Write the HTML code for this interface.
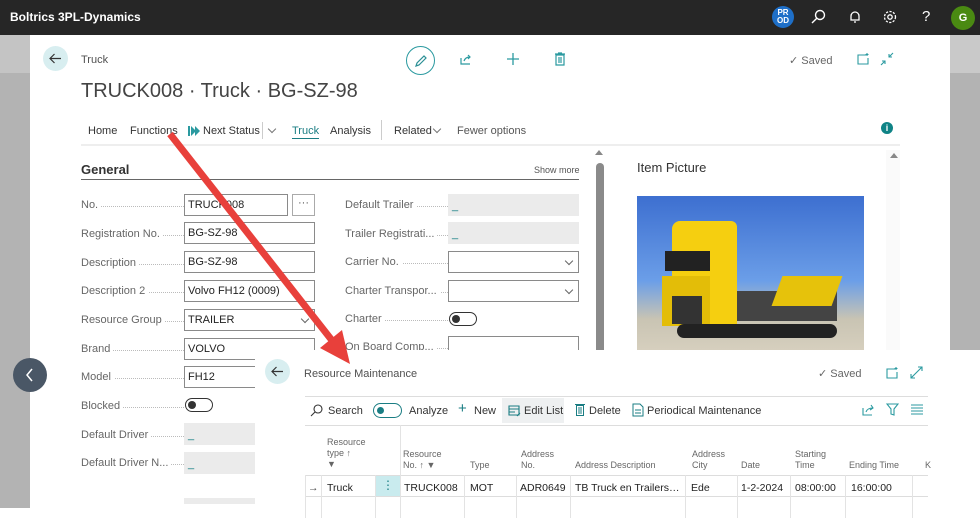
<!DOCTYPE html>
<html><head><meta charset="utf-8"><style>
*{margin:0;padding:0;box-sizing:border-box}
body{width:980px;height:518px;overflow:hidden;background:#fff;font-family:"Liberation Sans",sans-serif;position:relative;color:#333}
.a{position:absolute}
.t{font-size:11px;color:#505050;white-space:nowrap}
.lbl{position:absolute;font-size:11px;color:#666;white-space:nowrap;width:103px;overflow:hidden}
.lbl span{background:#fff;padding-right:3px}
.dots{position:absolute;left:0;right:0;top:7px;border-bottom:1px dotted #bbb}
.inp{position:absolute;height:22px;border:1px solid #8a8a8a;background:#fff;font-size:11px;color:#222;padding:4px 3px}
.ro{position:absolute;height:22px;background:#ebebeb;font-size:11px;color:#0b7a80;padding:6px 4px}
.chev{position:absolute;right:6px;top:6px;width:6px;height:6px;border-right:1px solid #666;border-bottom:1px solid #666;transform:rotate(45deg)}
.tog{position:absolute;width:28px;height:14px;border:1.5px solid #333;border-radius:8px}
.tog:after{content:"";position:absolute;left:2px;top:2px;width:8px;height:8px;border-radius:50%;background:#333}
.col{position:absolute;top:425px;height:93px;border-left:1px solid #e3e3e3}
.h{position:absolute;font-size:9px;color:#666;line-height:11px}
.c{position:absolute;top:482px;font-size:10.5px;color:#222;white-space:nowrap}
</style></head><body>
<div class="a" style="left:0;top:0;width:980px;height:35px;background:#262626"></div>
<div class="a" style="left:10px;top:10px;color:#fff;font-size:12px;font-weight:bold">Boltrics 3PL-Dynamics</div>
<div class="a" style="left:772px;top:6px;width:22px;height:22px;border-radius:50%;background:#1e6fc8;color:#fff;font-size:8px;line-height:8px;text-align:center;padding-top:3px;font-weight:bold">PR<br>OD</div>
<svg class="a" style="left:810px;top:9px" width="16" height="16" fill="none" stroke="#fff" stroke-width="1.4"><circle cx="10" cy="6" r="4.5"/><path d="M6.8 9.2 2 14"/></svg>
<svg class="a" style="left:847px;top:9px" width="16" height="16" fill="none" stroke="#fff" stroke-width="1.3"><path d="M4 11V7a4 4 0 0 1 8 0v4H4zM7 13h2"/></svg>
<svg class="a" style="left:882px;top:9px" width="16" height="16" fill="none" stroke="#fff" stroke-width="1.3"><circle cx="8" cy="8" r="2.2"/><circle cx="8" cy="8" r="5.5" stroke-dasharray="2.2 1.4"/></svg>
<div class="a" style="left:922px;top:8px;color:#fff;font-size:15px">?</div>
<div class="a" style="left:951px;top:6px;width:24px;height:24px;border-radius:50%;background:#4a8a12;color:#fff;font-size:11px;font-weight:bold;text-align:center;line-height:24px">G</div>
<div class="a" style="left:0;top:35px;width:30px;height:473px;background:#b3b3b3"></div>
<div class="a" style="left:0;top:35px;width:30px;height:38px;background:#c4c4c4"></div>
<div class="a" style="left:950px;top:35px;width:30px;height:315px;background:#b3b3b3"></div>
<div class="a" style="left:950px;top:35px;width:30px;height:38px;background:#c9c9c9"></div>
<div class="a" style="left:30px;top:35px;width:920px;height:473px;background:#fff"></div>
<div class="a" style="left:43px;top:46px;width:25px;height:25px;border-radius:50%;background:#d8eef0"></div>
<svg class="a" style="left:48px;top:51px" width="15" height="15" fill="none" stroke="#333" stroke-width="1.2"><path d="M13 7.5H2M6.5 3 2 7.5 6.5 12"/></svg>
<div class="a t" style="left:81px;top:54px">Truck</div>
<div class="a" style="left:81px;top:80px;font-size:20px;color:#444">TRUCK008 · Truck · BG-SZ-98</div>
<div class="a" style="left:406px;top:46px;width:29px;height:29px;border-radius:50%;border:1.5px solid #2b9aa0"></div>
<svg class="a" style="left:413px;top:53px" width="16" height="16" fill="none" stroke="#2b8f95" stroke-width="1.2"><path d="M3 13l1-3 7-7 2 2-7 7-3 1z"/></svg>
<svg class="a" style="left:459px;top:52px" width="14" height="14" fill="none" stroke="#2b9aa0" stroke-width="1.2"><path d="M2 6v6h9M5 9c1-3 3-4 6-4M9 3l2 2-2 2"/></svg>
<svg class="a" style="left:506px;top:52px" width="14" height="14" fill="none" stroke="#2b9aa0" stroke-width="1.3"><path d="M7 1v12M1 7h12"/></svg>
<svg class="a" style="left:554px;top:52px" width="12" height="14" fill="none" stroke="#2b9aa0" stroke-width="1.2"><path d="M2 3h8v10H2zM1 2h10M4 1h4M5 5v6M7 5v6"/></svg>
<div class="a t" style="left:789px;top:54px;color:#666">✓ Saved</div>
<svg class="a" style="left:857px;top:53px" width="13" height="12" fill="none" stroke="#2b9aa0" stroke-width="1.1"><path d="M9 2H1v9h10V5M10 0v3M8.5 1.5h3"/></svg>
<svg class="a" style="left:880px;top:52px" width="14" height="14" fill="none" stroke="#2b9aa0" stroke-width="1.1"><path d="M13 1 9 5M9 2v3h3M1 13l4-4M2 9h3v3"/></svg>
<div class="a t" style="left:88px;top:125px;color:#333">Home</div>
<div class="a t" style="left:130px;top:125px;color:#333">Functions</div>
<svg class="a" style="left:188px;top:126px" width="12" height="10" fill="#2b9aa0"><path d="M0 0h2v10H0zM3 0l5 5-5 5zM7 0l5 5-5 5z"/></svg>
<div class="a t" style="left:203px;top:125px;color:#333">Next Status</div>
<div class="a" style="left:262px;top:122px;width:1px;height:17px;background:#ccc"></div>
<div class="a" style="left:269px;top:126px;width:6px;height:6px;border-right:1px solid #777;border-bottom:1px solid #777;transform:rotate(45deg)"></div>
<div class="a t" style="left:292px;top:125px;color:#1a7d83;border-bottom:1.5px solid #1a7d83;padding-bottom:1px">Truck</div>
<div class="a t" style="left:330px;top:125px;color:#333">Analysis</div>
<div class="a" style="left:381px;top:120px;width:1px;height:20px;background:#ccc"></div>
<div class="a t" style="left:394px;top:125px;color:#333">Related</div>
<div class="a" style="left:434px;top:126px;width:6px;height:6px;border-right:1px solid #777;border-bottom:1px solid #777;transform:rotate(45deg)"></div>
<div class="a t" style="left:457px;top:125px;color:#555">Fewer options</div>
<div class="a" style="left:881px;top:122px;width:12px;height:12px;border-radius:50%;background:#0f8386;color:#fff;font-size:9px;font-weight:bold;text-align:center;line-height:12px">i</div>
<div class="a" style="left:81px;top:144px;width:819px;height:2px;background:#eee"></div>
<div class="a" style="left:81px;top:162px;font-size:13px;font-weight:bold;color:#333">General</div>
<div class="a" style="left:534px;top:165px;font-size:9px;color:#555">Show more</div>
<div class="a" style="left:81px;top:179px;width:498px;height:1px;background:#666"></div>
<div class="a" style="left:595px;top:150px;width:0;height:0;border-left:4px solid transparent;border-right:4px solid transparent;border-bottom:5px solid #888"></div>
<div class="a" style="left:596px;top:163px;width:8px;height:187px;background:#8a8a8a;border-radius:4px 4px 0 0"></div>

<div class="lbl" style="left:81px;top:199px"><div class="dots"></div><span style="position:relative">No.</span></div>
<div class="inp" style="left:184px;top:194px;width:104px">TRUCK008</div>
<div class="a" style="left:292px;top:194px;width:23px;height:22px;border:1px solid #aaa;font-size:11px;text-align:center;line-height:16px;color:#555">···</div>
<div class="lbl" style="left:81px;top:228px"><div class="dots"></div><span style="position:relative">Registration No.</span></div>
<div class="inp" style="left:184px;top:222px;width:131px">BG-SZ-98</div>
<div class="lbl" style="left:81px;top:257px"><div class="dots"></div><span style="position:relative">Description</span></div>
<div class="inp" style="left:184px;top:251px;width:131px">BG-SZ-98</div>
<div class="lbl" style="left:81px;top:285px"><div class="dots"></div><span style="position:relative">Description 2</span></div>
<div class="inp" style="left:184px;top:280px;width:131px">Volvo FH12 (0009)</div>
<div class="lbl" style="left:81px;top:314px"><div class="dots"></div><span style="position:relative">Resource Group</span></div>
<div class="inp" style="left:184px;top:309px;width:131px">TRAILER<div class="chev"></div></div>
<div class="lbl" style="left:81px;top:343px"><div class="dots"></div><span style="position:relative">Brand</span></div>
<div class="inp" style="left:184px;top:338px;width:131px">VOLVO</div>
<div class="lbl" style="left:81px;top:371px"><div class="dots"></div><span style="position:relative">Model</span></div>
<div class="inp" style="left:184px;top:366px;width:131px">FH12</div>
<div class="lbl" style="left:81px;top:400px"><div class="dots"></div><span style="position:relative">Blocked</span></div>
<div class="tog" style="left:185px;top:398px"></div>
<div class="lbl" style="left:81px;top:429px"><div class="dots"></div><span style="position:relative">Default Driver</span></div>
<div class="ro" style="left:184px;top:423px;width:131px">_</div>
<div class="lbl" style="left:81px;top:457px"><div class="dots"></div><span style="position:relative">Default Driver N...</span></div>
<div class="ro" style="left:184px;top:452px;width:131px">_</div>
<div class="a" style="left:184px;top:498px;width:131px;height:6px;background:#ebebeb"></div>

<div class="lbl" style="left:345px;top:199px"><div class="dots"></div><span style="position:relative">Default Trailer</span></div>
<div class="ro" style="left:448px;top:194px;width:131px">_</div>
<div class="lbl" style="left:345px;top:228px"><div class="dots"></div><span style="position:relative">Trailer Registrati...</span></div>
<div class="ro" style="left:448px;top:222px;width:131px">_</div>
<div class="lbl" style="left:345px;top:256px"><div class="dots"></div><span style="position:relative">Carrier No.</span></div>
<div class="inp" style="left:448px;top:251px;width:131px"><div class="chev"></div></div>
<div class="lbl" style="left:345px;top:285px"><div class="dots"></div><span style="position:relative">Charter Transpor...</span></div>
<div class="inp" style="left:448px;top:280px;width:131px"><div class="chev"></div></div>
<div class="lbl" style="left:345px;top:313px"><div class="dots"></div><span style="position:relative">Charter</span></div>
<div class="tog" style="left:449px;top:312px"></div>
<div class="lbl" style="left:345px;top:341px"><div class="dots"></div><span style="position:relative">On Board Comp...</span></div>
<div class="inp" style="left:448px;top:336px;width:131px;height:14px;border-bottom:none"></div>

<div class="a" style="left:637px;top:160px;font-size:13px;color:#333">Item Picture</div>
<div class="a" style="left:886px;top:150px;width:14px;height:200px;background:#fafafa"></div>
<div class="a" style="left:890px;top:153px;width:0;height:0;border-left:4px solid transparent;border-right:4px solid transparent;border-bottom:5px solid #888"></div>
<div class="a" style="left:637px;top:196px;width:227px;height:154px;background:linear-gradient(#3d6fd0,#6b9ee8 55%,#c9c4b3 80%,#d6cfbe);overflow:hidden">
<div class="a" style="left:35px;top:25px;width:65px;height:105px;background:#f5cf10;border-radius:8px 6px 0 0"></div>
<div class="a" style="left:28px;top:55px;width:45px;height:20px;background:#222"></div>
<div class="a" style="left:25px;top:80px;width:48px;height:50px;background:#e3bd08"></div>
<div class="a" style="left:35px;top:100px;width:30px;height:28px;background:#333"></div>
<div class="a" style="left:100px;top:95px;width:100px;height:30px;background:#444"></div>
<div class="a" style="left:140px;top:80px;width:60px;height:30px;background:#e6c20b;transform:skewX(-20deg)"></div>
<div class="a" style="left:40px;top:128px;width:160px;height:14px;background:#222;border-radius:7px"></div>
</div>

<div class="a" style="left:13px;top:358px;width:34px;height:34px;border-radius:50%;background:#4a5766"></div>
<svg class="a" style="left:22px;top:367px" width="16" height="16" fill="none" stroke="#fff" stroke-width="1.5"><path d="M10 2 5 8l5 6"/></svg>

<div class="a" style="left:255px;top:350px;width:725px;height:168px;background:#fff"></div>
<div class="a" style="left:265px;top:359px;width:25px;height:25px;border-radius:50%;background:#d8eef0"></div>
<svg class="a" style="left:270px;top:364px" width="15" height="15" fill="none" stroke="#333" stroke-width="1.2"><path d="M13 7.5H2M6.5 3 2 7.5 6.5 12"/></svg>
<div class="a t" style="left:304px;top:368px">Resource Maintenance</div>
<div class="a t" style="left:818px;top:367px;color:#666">✓ Saved</div>
<svg class="a" style="left:886px;top:367px" width="13" height="12" fill="none" stroke="#2b9aa0" stroke-width="1.1"><path d="M9 2H1v9h10V5M10 0v3M8.5 1.5h3"/></svg>
<svg class="a" style="left:910px;top:366px" width="13" height="13" fill="none" stroke="#2b9aa0" stroke-width="1.1"><path d="M1 12 12 1M8 1h4v4M1 8v4h4"/></svg>
<div class="a" style="left:305px;top:396px;width:623px;height:1px;background:#ddd"></div>
<svg class="a" style="left:310px;top:404px" width="13" height="13" fill="none" stroke="#333" stroke-width="1.1"><circle cx="8" cy="5" r="4"/><path d="M5 8 1 12"/></svg>
<div class="a t" style="left:328px;top:405px;color:#333">Search</div>
<div class="a" style="left:373px;top:403px;width:29px;height:15px;border:1.5px solid #1a7d83;border-radius:8px"></div>
<div class="a" style="left:377px;top:407px;width:7px;height:7px;border-radius:50%;background:#1a7d83"></div>
<div class="a t" style="left:409px;top:405px;color:#333">Analyze</div>
<div class="a" style="left:458px;top:401px;font-size:15px;color:#1a7d83;line-height:15px">+</div>
<div class="a t" style="left:474px;top:405px;color:#333">New</div>
<div class="a" style="left:502px;top:398px;width:62px;height:25px;background:#eef0f1"></div>
<svg class="a" style="left:508px;top:405px" width="13" height="12" fill="none" stroke="#1a7d83" stroke-width="1.1"><path d="M1 1h10v9H1zM1 4h10M1 7h6M9 11l3-3"/></svg>
<div class="a t" style="left:524px;top:405px;color:#333">Edit List</div>
<svg class="a" style="left:575px;top:403px" width="10" height="13" fill="none" stroke="#1a7d83" stroke-width="1"><path d="M1.5 2.5h7v10h-7zM0 1.5h10M4 4v7M6 4v7"/></svg>
<div class="a t" style="left:589px;top:405px;color:#333">Delete</div>
<svg class="a" style="left:632px;top:403px" width="12" height="14" fill="none" stroke="#1a7d83" stroke-width="1"><path d="M1 1h7l3 3v9H1zM3 7h6M3 10h6"/></svg>
<div class="a t" style="left:647px;top:405px;color:#333">Periodical Maintenance</div>
<svg class="a" style="left:862px;top:403px" width="13" height="13" fill="none" stroke="#2b9aa0" stroke-width="1.1"><path d="M1 5v7h9M4 9c1-3 3-4 7-4M9 2l2 3-3 2"/></svg>
<svg class="a" style="left:886px;top:403px" width="13" height="13" fill="none" stroke="#2b9aa0" stroke-width="1.1"><path d="M1 1h11L8 6v6L5 11V6z"/></svg>
<svg class="a" style="left:911px;top:404px" width="12" height="11" stroke="#2b9aa0" stroke-width="1.1"><path d="M0 1h12M0 4h12M0 7h12M0 10h12"/></svg>
<div class="a" style="left:305px;top:425px;width:623px;height:1px;background:#ddd"></div>
<div class="a" style="left:305px;top:475px;width:623px;height:1px;background:#ddd"></div>
<div class="a" style="left:305px;top:496px;width:623px;height:1px;background:#ddd"></div>
<div class="col" style="left:305px;top:475px;height:43px"></div>
<div class="col" style="left:321px;top:475px;height:43px"></div>
<div class="col" style="left:375px;top:475px;height:43px"></div>
<div class="col" style="left:400px"></div>
<div class="col" style="left:464px;top:475px;height:43px"></div>
<div class="col" style="left:516px;top:475px;height:43px"></div>
<div class="col" style="left:570px;top:475px;height:43px"></div>
<div class="col" style="left:685px;top:475px;height:43px"></div>
<div class="col" style="left:737px;top:475px;height:43px"></div>
<div class="col" style="left:790px;top:475px;height:43px"></div>
<div class="col" style="left:845px;top:475px;height:43px"></div>
<div class="col" style="left:912px;top:475px;height:43px"></div>
<div class="a" style="left:376px;top:476px;width:24px;height:20px;background:#c9ebee;color:#1a7d83;text-align:center;font-size:12px;line-height:18px">⋮</div>
<div class="h" style="left:327px;top:437px">Resource<br>type ↑<br>▼</div>
<div class="h" style="left:403px;top:449px">Resource<br>No. ↑ ▼</div>
<div class="h" style="left:470px;top:460px">Type</div>
<div class="h" style="left:521px;top:449px">Address<br>No.</div>
<div class="h" style="left:575px;top:460px">Address Description</div>
<div class="h" style="left:692px;top:449px">Address<br>City</div>
<div class="h" style="left:741px;top:460px">Date</div>
<div class="h" style="left:795px;top:449px">Starting<br>Time</div>
<div class="h" style="left:849px;top:460px">Ending Time</div>
<div class="h" style="left:925px;top:460px">K</div>
<div class="c" style="left:308px;color:#555">→</div>
<div class="c" style="left:327px">Truck</div>
<div class="c" style="left:404px">TRUCK008</div>
<div class="c" style="left:470px">MOT</div>
<div class="c" style="left:520px">ADR0649</div>
<div class="c" style="left:575px;width:108px;overflow:hidden;text-overflow:ellipsis">TB Truck en Trailerservice</div>
<div class="c" style="left:691px">Ede</div>
<div class="c" style="left:741px">1-2-2024</div>
<div class="c" style="left:795px">08:00:00</div>
<div class="c" style="left:851px">16:00:00</div>

<svg class="a" style="left:0;top:0" width="980" height="518"><line x1="170" y1="134" x2="334" y2="343" stroke="#e8403b" stroke-width="7"/><polygon points="350,364 320,348 342,330" fill="#e8403b"/></svg>
</body></html>
